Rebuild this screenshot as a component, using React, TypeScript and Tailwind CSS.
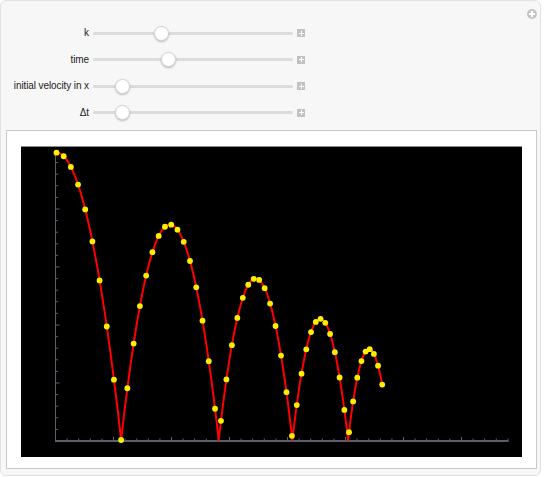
import React from "react";

// bouncing ball, page coordinates (svg viewBox is offset to the page)
const GROUND = 440;
const X0 = 56.5;
const H0 = 287.3;
const G = 7.094;
const VX0 = 7.18;
const E = 0.866;
const F = 0.872;
const T_END = 58;

type Arc = { ts: number; te: number; xs: number; hs: number; vy: number; vx: number };

function buildArcs(): Arc[] {
  const arcs: Arc[] = [];
  let ts = 0;
  let xs = X0;
  let hs = H0;
  let vy = 0;
  let vx = VX0;
  while (ts < T_END) {
    const tau = (vy + Math.sqrt(vy * vy + 2 * G * hs)) / G;
    arcs.push({ ts, te: ts + tau, xs, hs, vy, vx });
    const impact = G * tau - vy;
    xs = xs + vx * tau;
    ts = ts + tau;
    hs = 0;
    vy = E * impact;
    vx = vx * F;
  }
  return arcs;
}

const arcs = buildArcs();

function pos(t: number): [number, number] {
  const a = arcs.find((k) => t <= k.te + 1e-9) ?? arcs[arcs.length - 1];
  const d = t - a.ts;
  const h = Math.max(0, a.hs + a.vy * d - 0.5 * G * d * d);
  return [a.xs + a.vx * d, GROUND - h];
}

function curvePath() {
  const ts: number[] = [];
  for (let t = 0; t <= T_END; t += 0.05) ts.push(t);
  arcs.forEach((a) => a.te < T_END && ts.push(a.te));
  ts.push(T_END);
  ts.sort((a, b) => a - b);
  return ts
    .map((t, i) => {
      const [x, y] = pos(t);
      return `${i === 0 ? "M" : "L"}${x.toFixed(2)},${y.toFixed(2)}`;
    })
    .join(" ");
}

const dots = Array.from({ length: T_END + 1 }, (_, t) => pos(t));

const sliders = [
  { label: "k", at: 68 },
  { label: "time", at: 75 },
  { label: "initial velocity in x", at: 29 },
  { label: "\u0394t", at: 29 },
];

function Plot() {
  const xTicks = Array.from({ length: 39 }, (_, i) => i + 1);
  const yTicks = Array.from({ length: 24 }, (_, i) => i + 1);
  return (
    <svg width={501} height={311} viewBox="21 146 501 311" className="block">
      <rect x={21} y={146} width={501} height={311} fill="#000" />
      <line x1={21} y1={146.5} x2={522} y2={146.5} stroke="#8a8a8a" strokeWidth={1} />
      <g stroke="#5a5f6a" strokeWidth={1}>
        <line x1={55.5} y1={151} x2={55.5} y2={441.5} />
        <line x1={55} y1={441} x2={508.5} y2={441} strokeWidth={1.8} />
        {xTicks.map((n) => {
          const x = 55.5 + 11.6 * n;
          const len = n % 5 === 0 ? 4 : 2.5;
          return <line key={"x" + n} x1={x} y1={441} x2={x} y2={441 - len} />;
        })}
        {yTicks.map((n) => {
          const y = 441 - 11.6 * n;
          const len = n % 5 === 0 ? 4 : 2.5;
          return <line key={"y" + n} x1={55.5} y1={y} x2={55.5 + len} y2={y} />;
        })}
      </g>
      <path d={curvePath()} fill="none" stroke="#ff0000" strokeWidth={2} strokeLinejoin="round" />
      {dots.map(([x, y], i) => (
        <circle key={i} cx={x} cy={y} r={2.9} fill="#fff000" />
      ))}
    </svg>
  );
}

function PlusBox() {
  return (
    <div className="relative h-[8px] w-[8px] bg-[#c2c2c2]">
      <div className="absolute left-[1.5px] top-[3.5px] h-[1px] w-[5px] bg-white" />
      <div className="absolute left-[3.5px] top-[1.5px] h-[5px] w-[1px] bg-white" />
    </div>
  );
}

export default function App() {
  return (
    <div className="h-[477px] w-[544px] bg-white font-['Liberation_Sans',Arial,sans-serif]">
      <div className="relative flex h-[476px] w-[541px] flex-col rounded-[6px] border border-[#e2e2e2] bg-[#f7f7f7]">
        <div className="absolute left-[526px] top-[8px] flex h-[10px] w-[10px] items-center justify-center rounded-full bg-[#c4c4c4]">
          <div className="absolute h-[1.5px] w-[6px] bg-white" />
          <div className="absolute h-[6px] w-[1.5px] bg-white" />
        </div>

        <div className="flex flex-col pt-[19px]">
          {sliders.map((s) => (
            <div key={s.label} className="flex h-[26.5px] items-center">
              <div className="w-[88px] text-right text-[10px] leading-none tracking-[-0.1px] text-[#222]">
                {s.label}
              </div>
              <div className="relative ml-[4px] h-[3px] w-[200px] rounded-full bg-[#dcdcdc]">
                <div
                  className="absolute top-[-6px] h-[15px] w-[15px] rounded-full border border-[#d4d4d4] bg-white shadow-[0_1px_2px_rgba(0,0,0,0.25)]"
                  style={{ left: s.at - 7.5 }}
                />
              </div>
              <div className="ml-[4px]">
                <PlusBox />
              </div>
            </div>
          ))}
        </div>

        <div className="ml-[5px] mt-[4px] h-[339px] w-[531px] border border-[#c9c9c9] bg-white pl-[14px] pt-[15px]">
          <Plot />
        </div>
      </div>
    </div>
  );
}
